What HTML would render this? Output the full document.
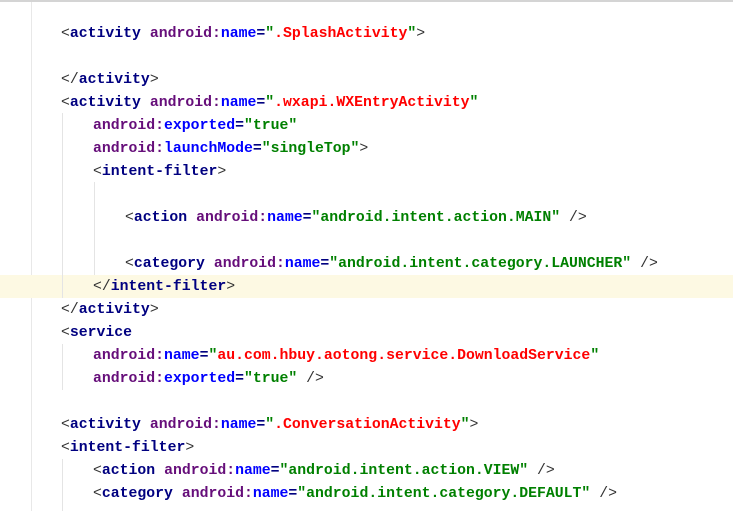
<!DOCTYPE html><html><head><style>
body{margin:0;width:733px;height:511px;background:#fff;position:relative;overflow:hidden;font-family:"Liberation Mono",monospace;font-size:14.8px;font-weight:bold}
.l{position:absolute;white-space:pre;height:23px;line-height:24px}
.t{color:#000080}.a{color:#660e7a}.n{color:#0000ff}.s{color:#008000}.r{color:#ff0000}.b{color:#333;font-weight:normal}
.g{position:absolute;width:1px;background:#e4e4e4}
</style></head><body>
<div style="position:absolute;left:0;top:0;width:733px;height:2px;background:#d4d4d4"></div>
<div class="g" style="left:31px;top:2px;height:509px;background:#e8e8e8"></div>
<div style="position:absolute;left:0;top:275px;width:733px;height:23px;background:#fdf9e3"></div>
<div class="g" style="left:62px;top:113px;height:185px"></div>
<div class="g" style="left:94px;top:182px;height:93px"></div>
<div class="g" style="left:62px;top:344px;height:46px"></div>
<div class="g" style="left:62px;top:459px;height:52px"></div>
<div class="l" style="left:61px;top:22px"><span class="b">&lt;</span><span class="t">activity </span><span class="a">android:</span><span class="n">name</span><span class="t">=</span><span class="s">"</span><span class="r">.SplashActivity</span><span class="s">"</span><span class="b">&gt;</span></div>
<div class="l" style="left:61px;top:68px"><span class="b">&lt;/</span><span class="t">activity</span><span class="b">&gt;</span></div>
<div class="l" style="left:61px;top:91px"><span class="b">&lt;</span><span class="t">activity </span><span class="a">android:</span><span class="n">name</span><span class="t">=</span><span class="s">"</span><span class="r">.wxapi.WXEntryActivity</span><span class="s">"</span></div>
<div class="l" style="left:93px;top:114px"><span class="a">android:</span><span class="n">exported</span><span class="t">=</span><span class="s">"true"</span></div>
<div class="l" style="left:93px;top:137px"><span class="a">android:</span><span class="n">launchMode</span><span class="t">=</span><span class="s">"singleTop"</span><span class="b">&gt;</span></div>
<div class="l" style="left:93px;top:160px"><span class="b">&lt;</span><span class="t">intent-filter</span><span class="b">&gt;</span></div>
<div class="l" style="left:125px;top:206px"><span class="b">&lt;</span><span class="t">action </span><span class="a">android:</span><span class="n">name</span><span class="t">=</span><span class="s">"android.intent.action.MAIN"</span><span class="b"> /&gt;</span></div>
<div class="l" style="left:125px;top:252px"><span class="b">&lt;</span><span class="t">category </span><span class="a">android:</span><span class="n">name</span><span class="t">=</span><span class="s">"android.intent.category.LAUNCHER"</span><span class="b"> /&gt;</span></div>
<div class="l" style="left:93px;top:275px"><span class="b">&lt;/</span><span class="t">intent-filter</span><span class="b">&gt;</span></div>
<div class="l" style="left:61px;top:298px"><span class="b">&lt;/</span><span class="t">activity</span><span class="b">&gt;</span></div>
<div class="l" style="left:61px;top:321px"><span class="b">&lt;</span><span class="t">service</span></div>
<div class="l" style="left:93px;top:344px"><span class="a">android:</span><span class="n">name</span><span class="t">=</span><span class="s">"</span><span class="r">au.com.hbuy.aotong.service.DownloadService</span><span class="s">"</span></div>
<div class="l" style="left:93px;top:367px"><span class="a">android:</span><span class="n">exported</span><span class="t">=</span><span class="s">"true"</span><span class="b"> /&gt;</span></div>
<div class="l" style="left:61px;top:413px"><span class="b">&lt;</span><span class="t">activity </span><span class="a">android:</span><span class="n">name</span><span class="t">=</span><span class="s">"</span><span class="r">.ConversationActivity</span><span class="s">"</span><span class="b">&gt;</span></div>
<div class="l" style="left:61px;top:436px"><span class="b">&lt;</span><span class="t">intent-filter</span><span class="b">&gt;</span></div>
<div class="l" style="left:93px;top:459px"><span class="b">&lt;</span><span class="t">action </span><span class="a">android:</span><span class="n">name</span><span class="t">=</span><span class="s">"android.intent.action.VIEW"</span><span class="b"> /&gt;</span></div>
<div class="l" style="left:93px;top:482px"><span class="b">&lt;</span><span class="t">category </span><span class="a">android:</span><span class="n">name</span><span class="t">=</span><span class="s">"android.intent.category.DEFAULT"</span><span class="b"> /&gt;</span></div>
</body></html>
